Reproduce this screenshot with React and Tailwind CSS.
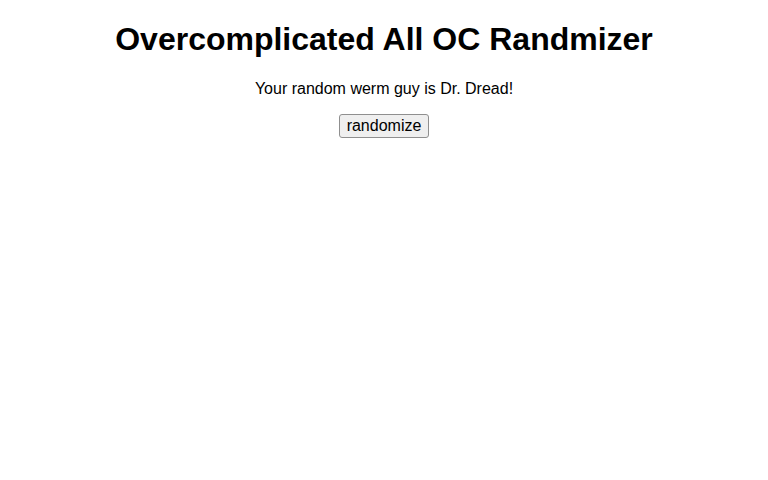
export default function App() {
  return (
    <div className="text-center text-black bg-white min-h-screen font-['Liberation_Sans',Arial,sans-serif]">
      <h1 className="pt-[21.44px] mb-[21.44px] text-[32px] leading-[normal] font-bold">
        Overcomplicated All OC Randmizer
      </h1>
      <p className="mb-4 text-base leading-[normal]">Your random werm guy is Dr. Dread!</p>
      <button className="px-[7px] py-[2px] text-base leading-[normal] bg-[#efefef] border border-[#8f8f8f] rounded-[3px]">
        randomize
      </button>
    </div>
  );
}
